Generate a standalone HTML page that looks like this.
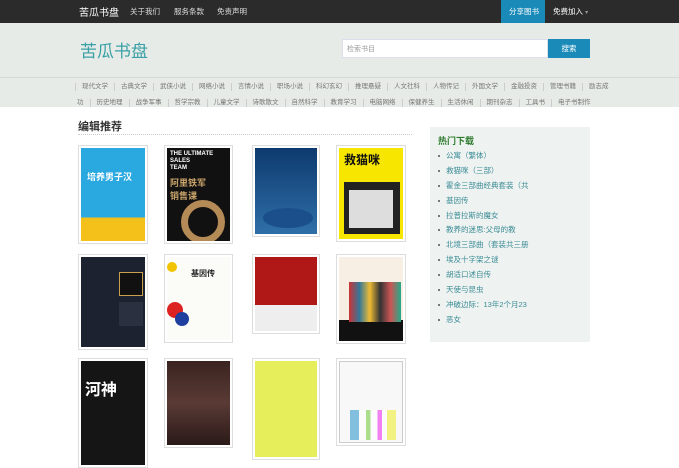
<!DOCTYPE html>
<html><head><meta charset="utf-8"><style>
*{margin:0;padding:0;box-sizing:border-box}
body{width:679px;height:460px;overflow:hidden;background:#fff;font-family:"Liberation Sans","Noto Sans CJK SC",sans-serif;position:relative}
.a{position:absolute}
.top{left:0;top:0;width:679px;height:23px;background:#2b2b2b}
.top span{position:absolute;top:6px;font-size:7.5px;color:#ddd}
.band{left:0;top:23px;width:679px;height:84px;background:#e6ebe8}
.cats{left:0;top:77px;width:679px;border-top:1px solid #d4dad6}
.row{position:absolute;font-size:6.5px;color:#777;white-space:nowrap}
.row i{font-style:normal;display:inline-block;border-left:1px solid #ccc;padding:0 6px;line-height:8px}
.bk{position:absolute;border:1px solid #ddd;padding:2px;background:#fff}
.bk div{width:100%;height:100%;position:relative;overflow:hidden}
.side{left:430px;top:127px;width:160px;height:215px;background:#eef2f0}
.side ul{list-style:none;position:absolute;left:8px;top:22px}
.side li{font-size:7.5px;color:#3b8c96;height:14.9px;line-height:14px}
.side li:before{content:"";display:inline-block;width:2px;height:2px;background:#777;margin-right:6px;vertical-align:middle}
</style></head><body>
<div class="a top">
<span style="left:79px;top:4px;font-size:10px;color:#fff">苦瓜书盘</span>
<span style="left:130px">关于我们</span><span style="left:174px">服务条款</span><span style="left:217px">免责声明</span>
<div class="a" style="left:501px;top:0;width:44px;height:23px;background:#1a8bb9"></div>
<span style="left:509px;color:#fff">分享图书</span><span style="left:553px;color:#fff">免费加入 <span style="position:static;color:#999;font-size:6px">▾</span></span>
</div>
<div class="a band"></div>
<div class="a" style="left:80px;top:37px;font-size:17px;color:#3aa0a6">苦瓜书盘</div>
<div class="a" style="left:342px;top:39px;width:206px;height:19px;background:#fff;border:1px solid #dde"></div>
<div class="a" style="left:347px;top:44px;font-size:7px;color:#999">检索书目</div>
<div class="a" style="left:548px;top:39px;width:42px;height:19px;background:#1a8bb9;color:#fff;font-size:7.5px;text-align:center;line-height:19px">搜索</div>
<div class="a cats"></div>
<div class="row" style="left:75px;top:83px"><i>现代文学</i><i>古典文学</i><i>武侠小说</i><i>网络小说</i><i>言情小说</i><i>职场小说</i><i>科幻玄幻</i><i>推理悬疑</i><i>人文社科</i><i>人物传记</i><i>外国文学</i><i>金融投资</i><i>管理书籍</i><i>励志成</i></div>
<div class="row" style="left:71px;top:96px"><span style="padding:0 6px">功</span><i>历史地理</i><i>战争军事</i><i>哲学宗教</i><i>儿童文学</i><i>诗歌散文</i><i>自然科学</i><i>教育学习</i><i>电脑网络</i><i>保健养生</i><i>生活休闲</i><i>期刊杂志</i><i>工具书</i><i>电子书制作</i></div>
<div class="a" style="left:78px;top:118px;font-size:11px;font-weight:bold;color:#333">编辑推荐</div>
<div class="a" style="left:78px;top:134px;width:334px;border-top:1px dotted #ccc"></div>

<div class="bk" style="left:78px;top:145px;width:70px;height:99px"><div style="background:linear-gradient(#2aa8e0 75%,#f4c01a 75%)"><span style="position:absolute;left:6px;top:22px;font-size:9px;color:#fff;font-weight:bold">培养男子汉</span></div></div>
<div class="bk" style="left:164px;top:145px;width:69px;height:99px"><div style="background:#111"><span style="position:absolute;left:3px;top:3px;font-size:6px;color:#fff;font-weight:bold;line-height:7px">THE ULTIMATE<br>SALES<br>TEAM</span><span style="position:absolute;left:3px;top:28px;font-size:9px;color:#c9a46a;font-weight:bold">阿里铁军<br>销售课</span><span style="position:absolute;left:14px;top:52px;width:44px;height:44px;border:7px solid #b48a56;border-radius:50%"></span></div></div>
<div class="bk" style="left:252px;top:145px;width:68px;height:92px"><div style="background:linear-gradient(#0d3a6e,#2f6fa8)"><span style="position:absolute;left:8px;top:60px;width:50px;height:20px;background:#1b4f8c;border-radius:50%"></span></div></div>
<div class="bk" style="left:336px;top:145px;width:70px;height:97px"><div style="background:#f6e600"><span style="position:absolute;left:5px;top:3px;font-size:12px;font-weight:bold;color:#111">救猫咪</span><span style="position:absolute;left:5px;top:34px;width:56px;height:52px;background:#222"></span><span style="position:absolute;left:10px;top:42px;width:44px;height:38px;background:#ddd"></span></div></div>

<div class="bk" style="left:78px;top:254px;width:70px;height:96px"><div style="background:#1c2230"><span style="position:absolute;left:38px;top:15px;width:24px;height:24px;background:#111;border:1px solid #c9a050"></span><span style="position:absolute;left:38px;top:45px;width:24px;height:24px;background:#2a3040"></span></div></div>
<div class="bk" style="left:164px;top:254px;width:69px;height:89px"><div style="background:#fbfbf7"><span style="position:absolute;left:0;top:5px;width:10px;height:10px;background:#f2c300;border-radius:50%"></span><span style="position:absolute;left:0;top:45px;width:16px;height:16px;background:#d22;border-radius:50%"></span><span style="position:absolute;left:8px;top:55px;width:14px;height:14px;background:#1e3fa0;border-radius:50%"></span><span style="position:absolute;left:24px;top:11px;font-size:8px;font-weight:bold;color:#222">基因传</span></div></div>
<div class="bk" style="left:252px;top:254px;width:68px;height:80px"><div style="background:linear-gradient(#b01818 65%,#eee 65%)"></div></div>
<div class="bk" style="left:336px;top:254px;width:70px;height:90px"><div style="background:linear-gradient(#f7efe4 75%,#111 75%)"><span style="position:absolute;left:10px;top:25px;width:52px;height:40px;background:linear-gradient(90deg,#c33,#379,#eb3,#333,#c55,#2a8)"></span></div></div>

<div class="bk" style="left:78px;top:358px;width:70px;height:110px"><div style="background:#151515"><span style="position:absolute;left:4px;top:15px;font-size:16px;font-weight:bold;color:#fff">河神</span></div></div>
<div class="bk" style="left:164px;top:358px;width:69px;height:90px"><div style="background:linear-gradient(#3a2420,#5a3a34,#2a1a18)"></div></div>
<div class="bk" style="left:252px;top:358px;width:68px;height:102px"><div style="background:#e6ee5c"></div></div>
<div class="bk" style="left:336px;top:358px;width:70px;height:88px"><div style="background:#f8f8f8;border:1px solid #ccc"><span style="position:absolute;left:10px;top:48px;width:46px;height:30px;background:linear-gradient(90deg,#39c 20%,#fff 20%,#fff 35%,#7c4 35%,#7c4 45%,#fff 45%,#fff 60%,#e3e 60%,#e3e 70%,#fff 70%,#fff 80%,#ee3 80%);opacity:.6"></span></div></div>

<div class="a side">
<div class="a" style="left:8px;top:7px;font-size:9px;font-weight:bold;color:#2d7a2d">热门下载</div>
<ul><li>公寓（繁体）</li><li>救猫咪（三部）</li><li>霍金三部曲经典套装（共</li><li>基因传</li><li>拉普拉斯的魔女</li><li>教养的迷思:父母的教</li><li>北境三部曲（套装共三册</li><li>埃及十字架之谜</li><li>胡适口述自传</li><li>天使与昆虫</li><li>冲破边际：13年2个月23</li><li>恶女</li></ul>
</div>
</body></html>
